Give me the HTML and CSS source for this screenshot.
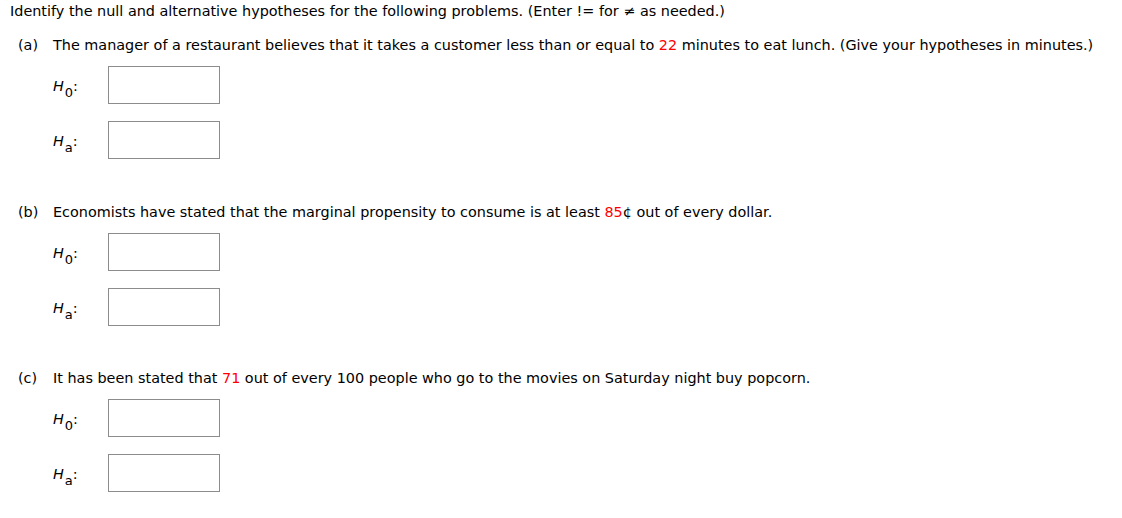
FILE: index.html
```html
<!DOCTYPE html>
<html>
<head>
<meta charset="utf-8">
<link rel="stylesheet" href="styles.css">
</head>
<body>
<div class="page">
  <div class="intro">Identify the null and alternative hypotheses for the following problems. (Enter != for ≠ as needed.)</div>

  <div class="part first">
    <div class="prompt"><span class="tag">(a)</span><span>The manager of a restaurant believes that it takes a customer less than or equal to <span class="red">22</span> minutes to eat lunch. (Give your hypotheses in minutes.)</span></div>
    <div class="answers">
      <div class="hrow"><span class="hlabel"><i>H</i><sub>0</sub>:</span><span class="box"></span></div>
      <div class="hrow"><span class="hlabel"><i>H</i><sub>a</sub>:</span><span class="box"></span></div>
    </div>
  </div>

  <div class="part">
    <div class="prompt"><span class="tag">(b)</span><span>Economists have stated that the marginal propensity to consume is at least <span class="red">85</span>¢ out of every dollar.</span></div>
    <div class="answers">
      <div class="hrow"><span class="hlabel"><i>H</i><sub>0</sub>:</span><span class="box"></span></div>
      <div class="hrow"><span class="hlabel"><i>H</i><sub>a</sub>:</span><span class="box"></span></div>
    </div>
  </div>

  <div class="part last">
    <div class="prompt"><span class="tag">(c)</span><span>It has been stated that <span class="red">71</span> out of every 100 people who go to the movies on Saturday night buy popcorn.</span></div>
    <div class="answers">
      <div class="hrow"><span class="hlabel"><i>H</i><sub>0</sub>:</span><span class="box"></span></div>
      <div class="hrow"><span class="hlabel"><i>H</i><sub>a</sub>:</span><span class="box"></span></div>
    </div>
  </div>
</div>
</body>
</html>
```

FILE: styles.css
```css
html, body {
  margin: 0;
  padding: 0;
  background: #ffffff;
}
.page {
  padding: 2px 10px 0 10px;
  font-family: "DejaVu Sans", Verdana, sans-serif;
  font-size: 14.4px;
  line-height: 18px;
  color: #000;
}
.intro {
  height: 18px;
}
.part {
  margin-top: 44px;
}
.part.first {
  margin-top: 16px;
}
.part.last {
  margin-top: 43px;
}
.prompt {
  display: flex;
  height: 18px;
  white-space: nowrap;
}
.tag {
  width: 43px;
  padding-left: 8px;
  box-sizing: border-box;
  flex-shrink: 0;
}
.red {
  color: #f00;
}
.answers {
  margin-left: 43px;
  padding-top: 12px;
  display: flex;
  flex-direction: column;
  gap: 17px;
}
.hrow {
  display: flex;
  align-items: center;
  height: 38px;
}
.hlabel {
  width: 55px;
  flex-shrink: 0;
  padding-top: 2px;
}
.hlabel i {
  margin-right: 1px;
}
.hlabel sub {
  font-size: 13px;
  vertical-align: -6px;
  line-height: 0;
}
.box {
  width: 112px;
  height: 38px;
  box-sizing: border-box;
  border: 1px solid #8c8c8c;
}
```
